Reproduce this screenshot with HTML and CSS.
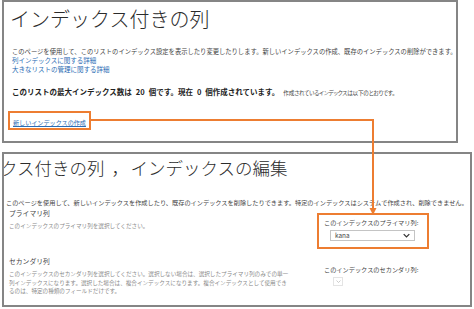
FILE: index.html
```html
<!DOCTYPE html>
<html lang="ja">
<head>
<meta charset="utf-8">
<title>インデックス付きの列</title>
<link rel="stylesheet" href="styles.css">
</head>
<body>
<div class="page">
  <section class="panel panel-top">
    <h1 class="title">インデックス付きの列</h1>
    <p class="desc">このページを使用して、このリストのインデックス設定を表示したり変更したりします。新しいインデックスの作成、既存のインデックスの削除ができます。</p>
    <div class="links">
      <a class="link" href="#">列インデックスに関する詳細</a>
      <a class="link" href="#">大きなリストの管理に関する詳細</a>
    </div>
    <p class="count"><b>このリストの最大インデックス数は<span class="num">20</span>個です。現在<span class="num">0</span>個作成されています。</b><span class="count-note">作成されているインデックスは以下のとおりです。</span></p>
    <div class="new-row">
      <span class="hl hl-link"><a class="link underline" href="#">新しいインデックスの作成</a></span>
    </div>
  </section>

  <section class="panel panel-bottom">
    <h1 class="title title-2">インデックス付きの列<span class="sep">，</span>インデックスの編集</h1>
    <p class="desc">このページを使用して、新しいインデックスを作成したり、既存のインデックスを削除したりできます。特定のインデックスはシステムで作成され、削除できません。</p>
    <div class="fields">
      <div class="field-info">
        <h2 class="field-head">プライマリ列</h2>
        <p class="hint">このインデックスのプライマリ列を選択してください。</p>
      </div>
      <div class="field-ctrl">
        <div class="hl hl-box">
          <div class="ctrl-label">このインデックスのプライマリ列:</div>
          <div class="select">
            <span>kana</span>
            <svg class="chev" viewBox="0 0 10 6" width="7" height="5"><path d="M1 1 L5 5 L9 1" fill="none" stroke="#333" stroke-width="1.8"/></svg>
          </div>
        </div>
      </div>
      <div class="field-info second">
        <h2 class="field-head">セカンダリ列</h2>
        <p class="hint hint-multi">このインデックスのセカンダリ列を選択してください。選択しない場合は、選択したプライマリ列のみでの単一<br>列インデックスになります。選択した場合は、複合インデックスになります。複合インデックスとして使用でき<br>るのは、特定の種類のフィールドだけです。</p>
      </div>
      <div class="field-ctrl second">
        <div class="ctrl-label">このインデックスのセカンダリ列:</div>
        <div class="select select-sm">
          <svg class="chev" viewBox="0 0 10 6" width="5" height="3"><path d="M1 1 L5 5 L9 1" fill="none" stroke="#bbb" stroke-width="1.5"/></svg>
        </div>
      </div>
    </div>
  </section>

  <svg class="connector" width="474" height="309" viewBox="0 0 474 309">
    <path d="M90 120 H373 V209" fill="none" stroke="#ed7d31" stroke-width="2"/>
    <path d="M369.5 208 L376.5 208 L373 215 Z" fill="#ed7d31"/>
  </svg>
</div>
</body>
</html>
```

FILE: styles.css
```css
* { box-sizing: border-box; }

html, body {
  margin: 0;
  padding: 0;
  background: #ffffff;
}

body {
  font-family: "Noto Sans CJK JP", "Noto Sans", sans-serif;
  color: #444;
  width: 474px;
  height: 309px;
  overflow: hidden;
}

.page {
  position: relative;
  width: 474px;
  height: 309px;
  padding-left: 2px;
}

.panel {
  border: 2px solid #858585;
  background: #fff;
  overflow: hidden;
}

.panel-top {
  width: 456px;
  height: 143px;
  padding: 5px 0 0 8px;
}

.panel-bottom {
  width: 470px;
  height: 155px;
  margin-top: 9px;
  padding: 1px 0 0 1px;
}

.title {
  margin: 0 0 0 -2px;
  font-size: 20px;
  line-height: 24px;
  font-weight: 300;
  color: #2b2b2b;
  white-space: nowrap;
}

.title-2 {
  margin: 1px 0 0 -75px;
  font-size: 17.5px;
  line-height: 23px;
}

.sep {
  display: inline-block;
  width: 26px;
  text-indent: 7px;
}

.desc {
  margin: 16px 0 0;
  font-size: 6.3px;
  line-height: 9px;
  white-space: nowrap;
  color: #444;
}

.panel-bottom .desc {
  margin-top: 19px;
  padding-left: 1px;
  font-size: 6.2px;
}

.links {
  display: flex;
  flex-direction: column;
}

.link {
  font-size: 6.5px;
  line-height: 9px;
  color: #2a6cb3;
  text-decoration: none;
  white-space: nowrap;
}

.link.underline {
  font-size: 6.1px;
  text-decoration: underline;
}

.count {
  margin: 13px 0 0;
  font-size: 7.5px;
  line-height: 9px;
  white-space: nowrap;
  color: #333;
}

.count b {
  font-weight: 700;
  color: #222;
}

.num {
  margin: 0 4px;
}

.count-note {
  margin-left: 4px;
  font-size: 5.6px;
  letter-spacing: -0.2px;
  font-feature-settings: "palt";
  color: #444;
}

.new-row {
  margin-top: 13px;
  margin-left: -4px;
  display: flex;
}

.hl {
  border: 2px solid #ed7d31;
}

.hl-link {
  display: inline-block;
  padding: 1px 3px 1px 3px;
  line-height: 9px;
}

.fields {
  display: grid;
  grid-template-columns: 312px 112px;
  row-gap: 7px;
  margin-top: 1px;
}

.field-info {
  padding-left: 4px;
}

.field-head {
  margin: 0;
  font-size: 6.8px;
  line-height: 10px;
  font-weight: 400;
  color: #444;
}

.hint {
  margin: 4px 0 0;
  font-size: 5.6px;
  line-height: 9px;
  color: #8a8a8a;
  white-space: nowrap;
}

.hint-multi {
  margin-top: 4px;
  line-height: 8.6px;
}

.field-ctrl {
  padding-top: 5px;
}

.field-ctrl.second {
  padding-top: 9px;
  padding-left: 7px;
}

.hl-box {
  width: 112px;
  padding: 3px 0 6px 5px;
}

.ctrl-label {
  font-size: 6.2px;
  line-height: 9px;
  color: #444;
  white-space: nowrap;
}

.select {
  display: flex;
  align-items: center;
  justify-content: space-between;
  width: 85px;
  height: 11px;
  margin: 3px 0 0 6px;
  padding: 0 4px 0 4px;
  border: 1px solid #c4c4c4;
  font-size: 6.4px;
  color: #444;
}

.select-sm {
  width: 10px;
  height: 9px;
  margin: 3px 0 0 9px;
  padding: 0;
  justify-content: center;
  border-color: #e4e4e4;
}

.chev {
  display: block;
}

.connector {
  position: absolute;
  left: 0;
  top: 0;
  pointer-events: none;
}
```
